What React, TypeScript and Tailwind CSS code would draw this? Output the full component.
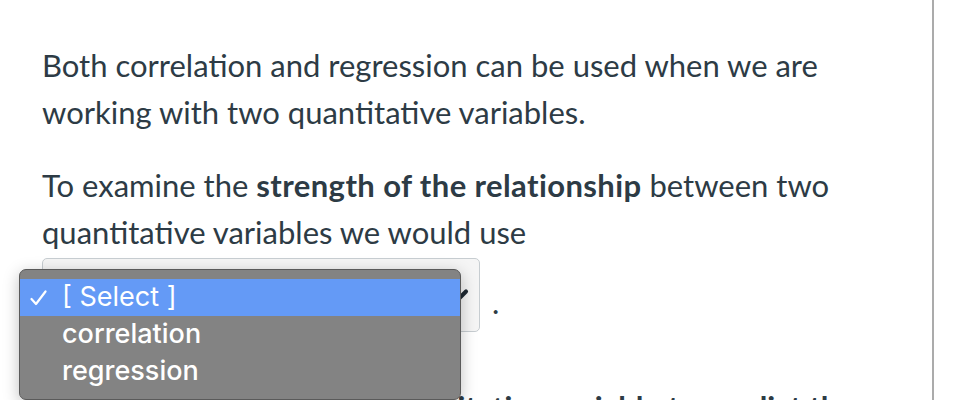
import { ChevronDown } from 'lucide-react'

const options = ['[ Select ]', 'correlation', 'regression']

export default function App() {
  return (
    <div className="relative h-[400px] w-[970px] overflow-hidden bg-white">
      <div className="flex h-full">
        {/* Question body */}
        <div className="w-[932px] pl-[42px] pr-[60px] pt-[42px] font-['Lato','Liberation_Sans',sans-serif] text-[31px] leading-[47px] text-[#2d3b45]">
          <p>Both correlation and regression can be used when we are working with two quantitative variables.</p>
          <p className="mt-[26px]">
            To examine the <strong className="font-bold tracking-[0.4px]">strength of the relationship</strong> between
            two quantitative variables we would use
          </p>
          <div className="mt-[2px] flex items-end gap-[12px]">
            <div className="flex h-[74px] w-[438px] items-center justify-end rounded-[5px] border border-[#c7cdd1] bg-[#f5f5f5] pr-[6px]">
              <ChevronDown className="h-[28px] w-[28px] text-[#1f2a33]" strokeWidth={3.5} />
            </div>
            <span className="mb-[6px]">.</span>
          </div>
          <p className="mt-[52px]">
            When we try to use <strong className="font-bold">one quantitative variable to predict the</strong> value of
            another, we would use
          </p>
        </div>
        <div className="w-[2px] bg-[#ababab]" />
        <div className="flex-1" />
      </div>

      {/* Open native select menu */}
      <div className="absolute left-[19px] top-[269px] w-[442px] overflow-hidden rounded-[7px] border border-[#5a5a5a] bg-[#838383] py-[9px] font-['Inter','Roboto',sans-serif] text-[27px] text-white shadow-[0_4px_16px_rgba(0,0,0,0.25)]">
        {options.map((o, i) => (
          <div
            key={o}
            className={`flex h-[37px] items-center ${i === 0 ? 'bg-[#649af6] font-normal' : 'font-medium'}`}
          >
            <span className="flex w-[42px] pl-[10px]">
              {i === 0 && (
                <svg width="17" height="16" viewBox="0 0 17 16" fill="none">
                  <path d="M1.5 9 L6 14 L15.5 1.5" stroke="white" strokeWidth="2.2" strokeLinecap="round" strokeLinejoin="round" />
                </svg>
              )}
            </span>
            <span>{o}</span>
          </div>
        ))}
      </div>
    </div>
  )
}
